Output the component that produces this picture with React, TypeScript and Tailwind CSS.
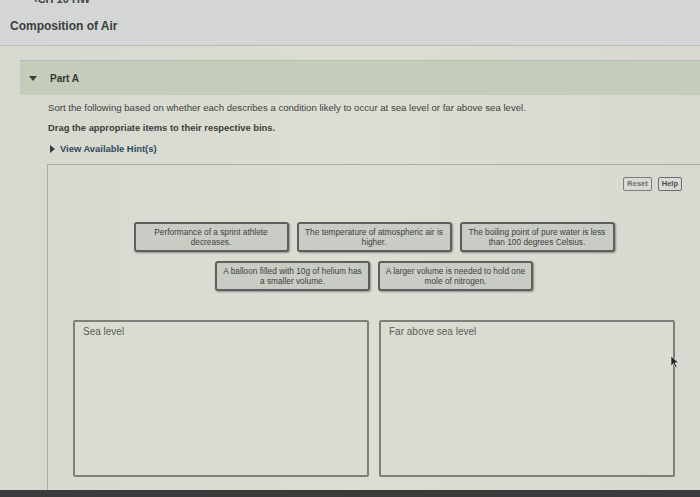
import React from "react";

const items1 = [
  ["Performance of a sprint athlete", "decreases."],
  ["The temperature of atmospheric air is", "higher."],
  ["The boiling point of pure water is less", "than 100 degrees Celsius."],
];
const items2 = [
  ["A balloon filled with 10g of helium has", "a smaller volume."],
  ["A larger volume is needed to hold one", "mole of nitrogen."],
];

function Item({ lines }: { lines: string[] }) {
  return (
    <div className="w-[155px] h-[30px] flex flex-col items-center justify-center text-center rounded-[3px] border-2 border-[#5c5f5c] bg-[#c9ccc4] text-[8.3px] leading-[10px] text-[#3e403e] whitespace-nowrap shadow-[1px_1px_2px_rgba(0,0,0,0.35)]">
      <span>{lines[0]}</span>
      <span>{lines[1]}</span>
    </div>
  );
}

export default function App() {
  return (
    <div
      className="w-[700px] h-[497px] overflow-hidden flex flex-col bg-gradient-to-r from-[#d6d9d0] via-[#dcded3] to-[#d8d8d0]"
      style={{ fontFamily: '"Liberation Sans", Arial, sans-serif' }}
    >
      {/* header */}
      <div className="h-[46px] shrink-0 flex flex-col bg-[#d3d6d4] border-b border-[#b8bbb8]">
        <div className="h-[12px] -mt-[7px] pl-[34px] text-[11px] leading-[12px] font-bold text-[#444]">‹CH 10 HW</div>
        <div className="pl-[10px] mt-[14px] h-[14px] text-[12px] leading-[14px] font-bold text-[#3a3c3c]">Composition of Air</div>
      </div>
      {/* part A bar */}
      <div className="mt-[14px] ml-[20px] h-[35px] shrink-0 bg-[#c4cdb9] border-t border-[#b6bdb0] flex items-center">
        <span className="ml-[9px] w-0 h-0 border-l-[4px] border-r-[4px] border-t-[5px] border-l-transparent border-r-transparent border-t-[#3c3e3c]" />
        <span className="ml-[13px] text-[10px] font-bold text-[#353735]">Part A</span>
      </div>
      {/* instructions */}
      <div className="pl-[48px] mt-[7px] h-[12px] text-[9.6px] leading-[12px] text-[#3d3f3d]">
        Sort the following based on whether each describes a condition likely to occur at sea level or far above sea level.
      </div>
      <div className="pl-[48px] mt-[8px] h-[12px] text-[9.4px] leading-[12px] font-bold text-[#3b3d3b]">
        Drag the appropriate items to their respective bins.
      </div>
      <div className="pl-[50px] mt-[9px] h-[12px] flex items-center text-[9.4px] leading-[12px] font-bold text-[#2e4a5e]">
        <span className="w-0 h-0 border-t-[4px] border-b-[4px] border-l-[5px] border-t-transparent border-b-transparent border-l-[#2e3e48]" />
        <span className="ml-[5px]">View Available Hint(s)</span>
      </div>
      {/* activity box */}
      <div className="mt-[9px] ml-[47px] flex-1 border-t border-l border-[#a9aca6] flex flex-col">
        <div className="flex justify-end gap-[6px] pr-[18px] pt-[12px]">
          <div className="h-[14px] px-[3px] flex items-center rounded-[2px] border border-[#7a7d7a] bg-[#d8dad4] text-[7.5px] font-bold text-[#6a6d6a]">Reset</div>
          <div className="h-[14px] px-[3px] flex items-center rounded-[2px] border border-[#6a6d6a] bg-[#d8dad4] text-[7.5px] font-bold text-[#4a4c4a]">Help</div>
        </div>
        <div className="mt-[31px] flex justify-center gap-[8px]">
          {items1.map((t) => (
            <Item key={t[0]} lines={t} />
          ))}
        </div>
        <div className="mt-[9px] flex justify-center gap-[8px]">
          {items2.map((t) => (
            <Item key={t[0]} lines={t} />
          ))}
        </div>
        <div className="mt-[29px] flex justify-center gap-[10px]">
          <div className="w-[296px] h-[157px] rounded-[2px] border-2 border-[#7c7f7c] bg-[#d9dcd1] px-[8px] pt-[2px] text-[10px] text-[#5a5d5a]">Sea level</div>
          <div className="w-[296px] h-[157px] rounded-[2px] border-2 border-[#7c7f7c] bg-[#dadbd1] px-[8px] pt-[2px] text-[10px] text-[#5a5d5a] relative">
            Far above sea level
            <svg className="absolute right-[-6px] top-[33px]" width="9" height="13" viewBox="0 0 9 13">
              <path d="M1 1 L1 11 L3.5 8.5 L5.5 12.5 L7 11.8 L5 7.8 L8.5 7.8 Z" fill="#222" stroke="#eee" strokeWidth="0.6" />
            </svg>
          </div>
        </div>
      </div>
      <div className="h-[7px] shrink-0 bg-[#3a3b3b]" />
    </div>
  );
}
